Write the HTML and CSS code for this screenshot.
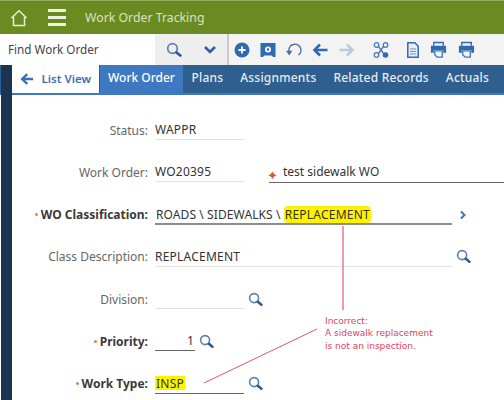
FILE: index.html
```html
<!DOCTYPE html>
<html lang="en">
<head>
    <meta charset="UTF-8">
    <title>Work Order Tracking</title>
    <link rel="stylesheet" href="styles.css">
</head>
<body>
    <svg class="defs" width="0" height="0">
        <symbol id="search" viewBox="0 0 16 16">
            <circle cx="6.5" cy="6.5" r="4.8" fill="none" stroke="#5b80ad" stroke-width="1.7"/>
            <path d="M10.5 10.500l3.800 3" stroke="#2f5b92" stroke-width="2.800" stroke-linecap="round"/>
        </symbol>
        <symbol id="printer" viewBox="0 0 18 18">
            <path d="M4 5V1.500h10V5" fill="none" stroke="#2f6bb0" stroke-width="1.500"/>
            <path d="M1 5h16v7.500h-3V9.500H4v3H1z" fill="#2f6bb0"/>
            <path d="M5 10.500h8v6.500H7.500L5 14.500z" fill="#f3f6fa" stroke="#3f78b8" stroke-width="1.400"/>
        </symbol>
    </svg>

    <!-- top bar -->
    <div class="topbar">
        <svg class="home-icon" width="18" height="18" viewBox="0 0 18 18">
            <path d="M1.500 9L9 1.800 16.500 9M3.500 8v8.500h11V8" fill="none" stroke="#e6eeda" stroke-width="1.500"/>
        </svg>
        <div class="menu-icon"><span></span><span></span><span></span></div>
        <div class="app-title">Work Order Tracking</div>
    </div>

    <!-- toolbar -->
    <div class="toolbar">
        <div class="find-box">Find Work Order</div>
        <div class="find-btn"><svg width="16" height="16"><use href="#search"/></svg></div>
        <div class="find-btn chevron-btn">
            <svg width="14" height="10" viewBox="0 0 14 10"><path d="M2 2l5 5 5-5" fill="none" stroke="#2f5f9f" stroke-width="2.600"/></svg>
        </div>
        <div class="tools">
            <svg width="16" height="16" viewBox="0 0 16 16"><circle cx="8" cy="8" r="7.500" fill="#2f6bb0"/><path d="M8 4.500v7M4.500 8h7" stroke="#fff" stroke-width="1.800"/></svg>
            <svg width="16" height="16" viewBox="0 0 16 16"><path d="M0.500 1h15v14h-2.500l-1-1.500h-8l-1 1.500H0.500z" fill="#2f6bb0"/><circle cx="8" cy="7.500" r="3" fill="#fff"/><circle cx="8" cy="7.500" r="1.300" fill="#2f6bb0"/></svg>
            <svg width="16" height="16" viewBox="0 0 16 16"><path d="M3.200 10A6 6 0 1 1 12.500 13" fill="none" stroke="#4a6f9f" stroke-width="1.500"/><path d="M0 8.800h6.400L3.200 13.500z" fill="#4a6f9f"/></svg>
            <svg width="16" height="14" viewBox="0 0 16 14"><path d="M15.500 7H3M8 1.500L2.500 7 8 12.500" fill="none" stroke="#2f6bb0" stroke-width="2.600"/></svg>
            <svg class="tool-gap" width="16" height="14" viewBox="0 0 16 14"><path d="M0.500 7H13M8 1.500L13.500 7 8 12.500" fill="none" stroke="#bccbdc" stroke-width="2.600"/></svg>
            <svg class="tool-gap-wide" width="16" height="16" viewBox="0 0 16 16"><g fill="none" stroke="#4a78b0" stroke-width="1.300"><circle cx="3.500" cy="3" r="2.300"/><circle cx="12.500" cy="3" r="2.300"/><circle cx="3.500" cy="13" r="2.300"/><path d="M5.500 4.500l5 7M10.500 4.500l-5 7"/></g><circle cx="12.500" cy="13" r="2.800" fill="#2f6bb0"/></svg>
            <svg class="tool-gap-wide" width="12" height="16" viewBox="0 0 12 16"><path d="M0.800 0.800h7l3.400 3.400v11H0.800z" fill="#e8eff7" stroke="#2f6bb0" stroke-width="1.500"/><path d="M3 7h6M3 9.500h6M3 12h6" stroke="#6f93bd"/></svg>
            <svg class="tool-gap" width="17" height="17"><use href="#printer"/></svg>
            <svg class="tool-gap" width="17" height="17"><use href="#printer"/></svg>
        </div>
    </div>

    <!-- tabs -->
    <div class="tabs">
        <div class="rail-top"></div>
        <div class="tab list-view">
            <svg width="14" height="12" viewBox="0 0 14 12"><path d="M13.500 6H3M7.500 1L2.200 6l5.300 5" fill="none" stroke="#3a6fb5" stroke-width="2.400"/></svg>
            List View
        </div>
        <div class="tab active">Work Order</div>
        <div class="tab">Plans</div>
        <div class="tab">Assignments</div>
        <div class="tab">Related Records</div>
        <div class="tab">Actuals</div>
    </div>

    <div class="main">
        <div class="rail"></div>
        <div class="form">
            <div class="row">
                <label>Status:</label>
                <div class="field w-short">WAPPR</div>
            </div>
            <div class="row">
                <label>Work Order:</label>
                <div class="field w-short">WO20395</div>
                <div class="desc"><span class="desc-star">&#10022;</span><div class="field strong">test sidewalk WO</div></div>
            </div>
            <div class="row">
                <label class="req"><i></i>WO Classification:</label>
                <div class="field w-long strong thick">ROADS \ SIDEWALKS \ <mark>REPLACEMENT</mark></div>
                <svg class="chevron" width="8" height="10" viewBox="0 0 8 10"><path d="M2 1.500l3.500 3.500L2 8.500" fill="none" stroke="#3f74b8" stroke-width="2"/></svg>
            </div>
            <div class="row">
                <label>Class Description:</label>
                <div class="field w-long">REPLACEMENT</div>
                <svg class="search" width="15" height="15"><use href="#search"/></svg>
            </div>
            <div class="row">
                <label>Division:</label>
                <div class="field w-short"></div>
                <svg class="search" width="15" height="15"><use href="#search"/></svg>
            </div>
            <div class="row">
                <label class="req"><i></i>Priority:</label>
                <div class="field w-tiny strong num">1</div>
                <svg class="search" width="15" height="15"><use href="#search"/></svg>
            </div>
            <div class="row">
                <label class="req"><i></i>Work Type:</label>
                <div class="field w-short strong"><mark class="flat">INSP</mark></div>
                <svg class="search" width="15" height="15"><use href="#search"/></svg>
            </div>
        </div>
    </div>

    <!-- red annotation drawn over the form -->
    <svg class="note-lines" width="504" height="400">
        <path d="M343 226V310" stroke="#e8788c" stroke-width="1.500"/>
        <path d="M317 329L204 383" stroke="#e0566e" stroke-width="1"/>
    </svg>
    <div class="note">Incorrect:<br>A sidewalk replacement<br>is not an inspection.</div>
</body>
</html>
```

FILE: styles.css
```css
html, body {
    margin: 0;
    height: 400px;
    overflow: hidden;
}

body {
    font-family: "Noto Sans", sans-serif;
    background-color: #fff;
    color: #333;
    position: relative;
}

.defs {
    position: absolute;
}

/* top bar */
.topbar {
    display: flex;
    align-items: center;
    height: 33px;
    background-color: #6a8b22;
    border-top: 1px solid #93ad5c;
    color: #d8e3c0;
}

.home-icon {
    margin-left: 10px;
}

.menu-icon {
    display: flex;
    flex-direction: column;
    gap: 4px;
    width: 18px;
    margin-left: 20px;
}

.menu-icon span {
    height: 3px;
    background-color: #edf3e0;
}

.app-title {
    margin-left: 19px;
    font-size: 12.300px;
}

/* toolbar */
.toolbar {
    display: flex;
    height: 31px;
    background-color: #f1f1f1;
}

.find-box {
    width: 147px;
    padding-left: 8px;
    background-color: #fff;
    font-size: 11.700px;
    line-height: 30px;
    color: #444;
}

.find-btn {
    display: flex;
    align-items: center;
    justify-content: center;
    width: 37px;
    background-color: #eeeeee;
}

.chevron-btn {
    width: 35px;
    border-right: 2px solid #c9c9c9;
}

.tools {
    display: flex;
    align-items: center;
    gap: 10px;
    padding-left: 5px;
    background-color: #f3f3f3;
    flex: 1;
}

.tools .tool-gap {
    margin-left: 1px;
}

.tools .tool-gap-wide {
    margin-left: 8px;
}

/* tabs */
.tabs {
    display: flex;
    height: 30px;
    background-color: #2f5f8e;
    color: #e4ecf4;
    font-size: 12px;
    font-weight: 500;
    box-sizing: border-box;
    border-bottom: 2px solid #3d78c0;
}

.rail-top {
    width: 11px;
    margin-left: 1px;
    background-color: #1b3550;
    margin-bottom: -2px;
}

.tab {
    padding: 0 8.500px;
    line-height: 26px;
    letter-spacing: 0.200px;
    white-space: nowrap;
}

.list-view {
    display: flex;
    align-items: center;
    gap: 8px;
    width: 87px;
    box-sizing: border-box;
    padding: 0 8px;
    margin-right: 1px;
    background-color: #fff;
    color: #3a6fb5;
    font-weight: 600;
    font-size: 11.500px;
    letter-spacing: 0;
}

.tab.active {
    width: 83px;
    box-sizing: border-box;
    padding: 0 8px;
    letter-spacing: 0;
    background-color: #3d78c0;
    color: #fff;
}

/* form */
.main {
    display: flex;
    height: 305px;
}

.rail {
    width: 11px;
    margin-left: 1px;
    background-color: #1b3550;
}

.form {
    flex: 1;
    display: flex;
    flex-direction: column;
    gap: 22.300px;
    padding-top: 25px;
}

.row {
    display: flex;
    align-items: center;
    height: 20px;
}

label {
    width: 136px;
    margin-right: 7px;
    text-align: right;
    font-size: 12px;
    color: #666;
    white-space: nowrap;
}

label.req {
    font-weight: 700;
    color: #3a3a3a;
}

label.req i {
    display: inline-block;
    width: 3px;
    height: 3px;
    margin-right: 3px;
    vertical-align: 3px;
    border-radius: 50%;
    background-color: #ee7a45;
}

.field {
    height: 20px;
    line-height: 19px;
    box-sizing: border-box;
    font-size: 12px;
    letter-spacing: 0.220px;
    color: #333;
    border-bottom: 1px solid #e2e2e2;
    white-space: nowrap;
}

.field.strong {
    border-bottom: 1px solid #666;
}

.field.thick {
    padding-left: 1px;
    letter-spacing: 0.100px;
    border-bottom: 2px solid #8c8c8c;
}

.w-short {
    width: 89px;
}

.w-long {
    width: 297px;
}

.w-tiny {
    width: 40px;
}

.num {
    text-align: right;
    padding-right: 1px;
}

mark {
    display: inline-block;
    height: 17px;
    line-height: 17px;
    padding: 0 1px;
    border-radius: 4px;
    letter-spacing: 0.220px;
    background-color: #fff200;
    color: #333;
}

mark.flat {
    height: 14px;
    line-height: 15px;
    margin-top: 1px;
    border-radius: 0;
}

.search {
    margin-left: 4px;
}

.chevron {
    margin-left: 7px;
}

/* description next to work order */
.desc {
    position: relative;
    flex: 1;
    margin-left: 25px;
    padding-left: 14px;
    border-bottom: 1px solid #666;
}

.desc .field,
.desc .field.strong {
    letter-spacing: 0;
    border-bottom: none;
}

.desc-star {
    position: absolute;
    left: -2px;
    top: 6px;
    font-size: 13px;
    line-height: 14px;
    color: #e8502a;
}

/* annotation */
.note-lines {
    position: absolute;
    left: 0;
    top: 0;
    pointer-events: none;
}

.note {
    position: absolute;
    left: 325px;
    top: 315px;
    font-family: "DejaVu Sans", sans-serif;
    font-size: 9px;
    line-height: 12.300px;
    color: #e0435c;
    white-space: nowrap;
}
```
